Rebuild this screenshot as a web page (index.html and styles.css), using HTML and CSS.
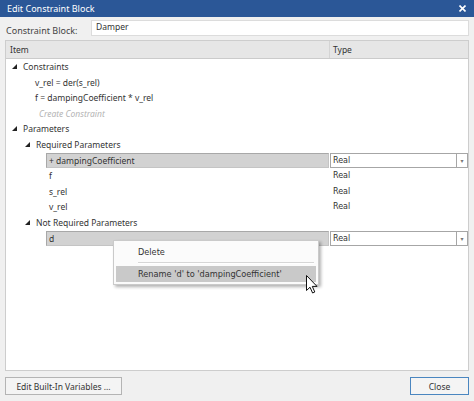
FILE: index.html
```html
<!DOCTYPE html>
<html>
<head>
<meta charset="utf-8">
<link rel="stylesheet" href="styles.css">
</head>
<body>
<div class="window">
  <div class="titlebar">
    <span class="title">Edit Constraint Block</span>
    <svg class="close" viewBox="0 0 7 7"><path d="M0.5 0.5 L6.5 6.5 M6.5 0.5 L0.5 6.5" stroke="#fff" stroke-width="1.6"/></svg>
  </div>
  <div class="field-row">
    <div class="field-label">Constraint Block:</div>
    <div class="field-input">Damper</div>
  </div>
  <div class="panel">
    <div class="panel-header">
      <div class="col-item">Item</div>
      <div class="col-type">Type</div>
    </div>
    <div class="tree">
      <div class="row">
        <div class="name l0"><svg class="tri" viewBox="0 0 5 5"><polygon points="5,0 5,5 0,5" fill="#222"/></svg><span>Constraints</span></div>
        <div class="type"></div>
      </div>
      <div class="row">
        <div class="name l1">v_rel = der(s_rel)</div>
        <div class="type"></div>
      </div>
      <div class="row">
        <div class="name l1">f = dampingCoefficient * v_rel</div>
        <div class="type"></div>
      </div>
      <div class="row">
        <div class="name l1 create">Create Constraint</div>
        <div class="type"></div>
      </div>
      <div class="row">
        <div class="name l0"><svg class="tri" viewBox="0 0 5 5"><polygon points="5,0 5,5 0,5" fill="#222"/></svg><span>Parameters</span></div>
        <div class="type"></div>
      </div>
      <div class="row">
        <div class="name l1g"><svg class="tri" viewBox="0 0 5 5"><polygon points="5,0 5,5 0,5" fill="#222"/></svg><span>Required Parameters</span></div>
        <div class="type"></div>
      </div>
      <div class="row">
        <div class="name boxed">+ dampingCoefficient</div>
        <div class="type-box"><span class="type-val">Real</span><span class="drop">&#9662;</span></div>
      </div>
      <div class="row">
        <div class="name l2">f</div>
        <div class="type">Real</div>
      </div>
      <div class="row">
        <div class="name l2">s_rel</div>
        <div class="type">Real</div>
      </div>
      <div class="row">
        <div class="name l2">v_rel</div>
        <div class="type">Real</div>
      </div>
      <div class="row">
        <div class="name l1g"><svg class="tri" viewBox="0 0 5 5"><polygon points="5,0 5,5 0,5" fill="#222"/></svg><span>Not Required Parameters</span></div>
        <div class="type"></div>
      </div>
      <div class="row">
        <div class="name boxed">d</div>
        <div class="type-box"><span class="type-val">Real</span><span class="drop">&#9662;</span></div>
      </div>
    </div>
  </div>
  <div class="footer">
    <div class="btn btn-vars">Edit Built-In Variables ...</div>
    <div class="btn btn-close">Close</div>
  </div>

  <div class="menu">
    <div class="mi">Delete</div>
    <div class="sep"></div>
    <div class="mi mi-hot">Rename 'd' to 'dampingCoefficient'</div>
  </div>
  <svg class="cursor" viewBox="0 0 12 19"><path d="M0.5 0.5 L0.5 15.5 L4 12.2 L6.6 18 L8.8 17 L6.3 11.4 L11 11.4 Z" fill="#fff" stroke="#111" stroke-width="1" stroke-linejoin="round"/></svg>
</div>
</body>
</html>
```
FILE: styles.css
```css
* { box-sizing: border-box; }
html, body { margin: 0; padding: 0; }
body {
  font-family: "Noto Sans", "Open Sans", sans-serif;
  font-size: 8.5px;
  color: #333;
}
.window {
  position: relative;
  width: 474px;
  height: 401px;
  background: #f0f0f0;
  display: flex;
  flex-direction: column;
  overflow: hidden;
}
.titlebar {
  height: 17px;
  flex: none;
  background: #2b5797;
  color: #fff;
  display: flex;
  align-items: center;
  justify-content: space-between;
  padding: 0 8px 0 7px;
  font-size: 9px;
}
.close { width: 7px; height: 7px; }
.field-row {
  display: flex;
  align-items: stretch;
  height: 16px;
  margin-top: 3px;
  flex: none;
}
.field-label {
  width: 91px;
  padding-left: 6px;
  padding-top: 4px;
  color: #444;
  font-size: 9px;
}
.field-input {
  width: 378px;
  background: #fff;
  border: 1px solid #dcdcdc;
  padding: 0 0 0 4px;
  line-height: 12px;
  color: #333;
}
.panel {
  margin: 4px 5px 0;
  height: 331px;
  flex: none;
  border: 1px solid #cdcdcd;
  background: #fff;
  display: flex;
  flex-direction: column;
}
.panel-header {
  height: 18px;
  flex: none;
  background: #e6e6e6;
  border-bottom: 1px solid #cbcbcb;
  display: grid;
  grid-template-columns: 324px 1fr;
}
.col-item {
  padding-left: 4px;
  border-right: 1px solid #d4d4d4;
  line-height: 17px;
}
.col-type { padding-left: 3px; line-height: 17px; }
.tree { flex: 1; }
.row {
  height: 15.55px;
  display: grid;
  grid-template-columns: 324px 1fr;
}
.name {
  display: flex;
  align-items: center;
  white-space: nowrap;
}
.tri { width: 5px; height: 5px; margin-right: 6px; flex: none; }
.l0 { padding-left: 6px; }
.l1 { padding-left: 29px; }
.l1g { padding-left: 19px; }
.l2 { padding-left: 43px; }
.create { padding-left: 33px; color: #b4b4b4; font-style: italic; }
.boxed {
  margin: 1px 1px 0 40px;
  height: 14.5px;
  background: #d2d2d2;
  border: 1px solid #a8a8a8;
  border-right-color: #c4c4c4;
  border-bottom-color: #c4c4c4;
  padding-left: 2px;
}
.type {
  display: flex;
  align-items: center;
  padding-left: 3px;
  font-family: "DejaVu Sans", sans-serif;
  font-size: 8px;
}
.type-box {
  margin-top: 1px;
  height: 14.5px;
  background: #fff;
  border: 1px solid #a6a6a6;
  display: flex;
  align-items: stretch;
  font-family: "DejaVu Sans", sans-serif;
  font-size: 8px;
}
.type-val { flex: 1; padding-left: 2px; display: flex; align-items: center; }
.drop {
  width: 11px;
  border-left: 1px solid #a6a6a6;
  display: flex;
  align-items: center;
  justify-content: center;
  font-size: 6px;
  color: #777;
}
.footer {
  display: flex;
  justify-content: space-between;
  padding: 0 5px;
  margin-top: 6px;
  flex: none;
}
.btn {
  height: 18px;
  background: #f4f4f4;
  border: 1px solid #b4b4b4;
  display: flex;
  align-items: center;
  justify-content: center;
  color: #333;
}
.btn-vars { width: 117px; }
.btn-close { width: 59px; border-color: #4a86c0; }
.menu {
  position: absolute;
  left: 113px;
  top: 240px;
  width: 206px;
  background: #fbfbfb;
  border: 1px solid #cacaca;
  padding: 2px;
  box-shadow: 2px 2px 3px rgba(0,0,0,0.3);
  font-family: "DejaVu Sans", sans-serif;
  font-size: 8.2px;
  color: #333;
}
.mi {
  height: 18px;
  padding-left: 22px;
  display: flex;
  align-items: center;
}
.sep {
  height: 2px;
  margin: 1px 2px 3px 22px;
  border-top: 1px solid #d6d6d6;
  border-bottom: 1px solid #fff;
}
.mi-hot {
  height: 16px;
  background: #c9c9c9;
  margin-top: -1px;
}
.cursor {
  position: absolute;
  left: 306px;
  top: 275px;
  width: 12px;
  height: 19px;
}
```
